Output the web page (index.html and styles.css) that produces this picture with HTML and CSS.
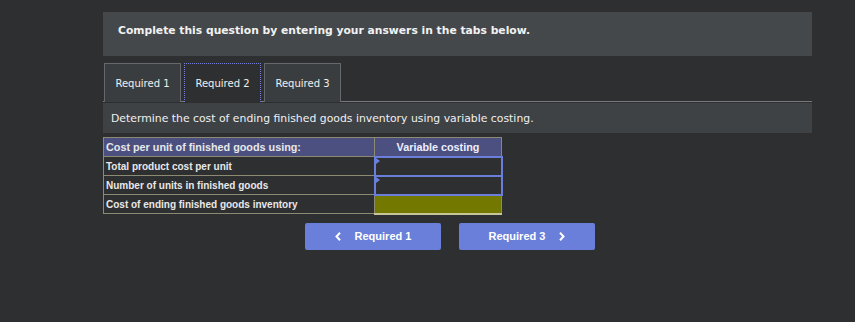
FILE: index.html
```html
<!DOCTYPE html>
<html>
<head>
<meta charset="utf-8">
<link rel="stylesheet" href="styles.css">
</head>
<body>
<div class="page">
  <div class="banner">Complete this question by entering your answers in the tabs below.</div>
  <div class="tabs">
    <div class="tab">Required 1</div>
    <div class="tab active">Required 2</div>
    <div class="tab">Required 3</div>
  </div>
  <div class="instr">Determine the cost of ending finished goods inventory using variable costing.</div>
  <table class="grid">
    <tr class="head"><th class="label">Cost per unit of finished goods using:</th><th class="val">Variable costing</th></tr>
    <tr class="r1"><td class="label">Total product cost per unit</td><td class="inp"><span class="flag"></span></td></tr>
    <tr class="r2"><td class="label">Number of units in finished goods</td><td class="inp"><span class="flag"></span></td></tr>
    <tr class="r3"><td class="label">Cost of ending finished goods inventory</td><td class="olive"></td></tr>
  </table>
  <div class="nav">
    <div class="btn"><svg class="chev left" width="6" height="9" viewBox="0 0 6 9"><path d="M5 0.8 L1.5 4.5 L5 8.2" fill="none" stroke="#fff" stroke-width="2"/></svg>Required 1</div>
    <div class="btn">Required 3<svg class="chev right" width="6" height="9" viewBox="0 0 6 9"><path d="M1 0.8 L4.5 4.5 L1 8.2" fill="none" stroke="#fff" stroke-width="2"/></svg></div>
  </div>
</div>
</body>
</html>
```
FILE: styles.css
```css
html, body { margin: 0; padding: 0; background: #2e2f31; }
body { width: 855px; height: 322px; overflow: hidden; }
.page { padding: 12px 0 0 103px; width: 709px; font-family: "DejaVu Sans", sans-serif; color: #e8e8e8; }
.banner { background: #45484b; height: 44px; box-sizing: border-box; padding: 12px 0 0 15px; font-weight: bold; font-size: 10.75px; color: #f2f2f2; }
.tabs { display: flex; margin-top: 7px; border-bottom: 1px solid #76797d; height: 38px; gap: 3px; padding-left: 1px; }
.tab { width: 77px; box-sizing: border-box; border: 1px solid #65686c; border-bottom: none; font-size: 10px; font-weight: normal; display: flex; align-items: center; justify-content: center; color: #f0f0f0; background: #3a3d40; height: 39px; }
.tab.active { background: #2e2f31; border: 1px dotted #7780d8; border-bottom: none; }
.instr { background: #3f4245; height: 30px; margin-top: 1px; box-sizing: border-box; padding: 9px 0 0 8px; font-size: 10.85px; color: #f0f0f0; }
.grid { border-collapse: collapse; margin-top: 4px; font-family: "Liberation Sans", Arial, sans-serif; font-size: 10px; font-weight: bold; }
.grid td, .grid th { border: 1px solid #8d8a72; padding: 0 2px; box-sizing: border-box; }
.head th { height: 19px; }
.r1 td { height: 19px; }
.r2 td { height: 19px; }
.r3 td { height: 19px; }
.grid .label { width: 271px; text-align: left; color: #e8e8e8; }
.grid th.label { font-size: 10.8px; }
.head th { background: #4b5080; color: #eef; }
.grid .val { width: 127px; text-align: center; font-size: 10.8px; }
.grid td.inp { border: 2px solid #6a7fd9; position: relative; padding: 0; }
.flag { position: absolute; left: 0; top: 0; width: 0; height: 0; border-top: 3px solid transparent; border-bottom: 3px solid transparent; border-left: 4px solid #6a7fd9; }
.grid td.olive { background: #727800; border-bottom: 2px solid #c9c59a; }
.nav { display: flex; gap: 18px; margin-top: 8px; padding-left: 202px; }
.btn { width: 136px; height: 27px; background: #6a7fd9; border-radius: 2px; color: #fff; font-family: "Liberation Sans", Arial, sans-serif; font-weight: bold; font-size: 11px; display: flex; align-items: center; justify-content: center; }
.chev { display: block; }
.chev.left { margin-right: 14px; }
.chev.right { margin-left: 14px; }
```
